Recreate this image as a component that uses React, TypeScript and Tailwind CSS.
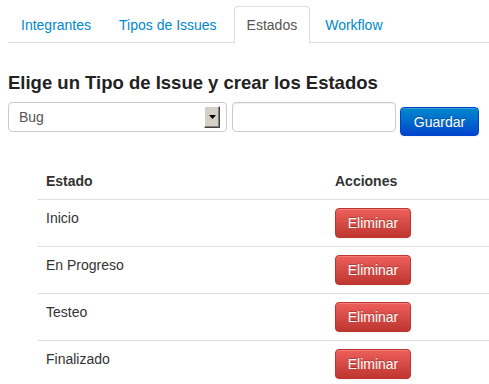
import React from "react";

const font = { fontFamily: '"Liberation Sans", Arial, sans-serif' };

export default function App() {
  const tabs = ["Integrantes", "Tipos de Issues", "Estados", "Workflow"];
  const rows = ["Inicio", "En Progreso", "Testeo", "Finalizado"];
  return (
    <div className="w-[489px] h-[384px] bg-white overflow-hidden text-[14px] text-[#333]" style={font}>
      <div className="pt-[6px] pl-[8px]">
        <ul className="flex border-b border-[#ddd] h-[37px]">
          {tabs.map((t, i) => {
            const active = i === 2;
            return (
              <li key={t} className={"-mb-px " + (i === 1 ? "mr-[4px]" : "mr-[2px]")}>
                <span
                  className={
                    "block px-[12px] py-[8px] leading-[20px] rounded-t-[4px] border " +
                    (active
                      ? "border-[#ddd] border-b-transparent bg-white text-[#555]"
                      : "border-transparent text-[#0088cc]")
                  }
                >
                  {t}
                </span>
              </li>
            );
          })}
        </ul>
      </div>
      <div className="pl-[8px]">
        <h3 className="mt-[30px] text-[18.5px] font-bold leading-[20px] text-[#222]">
          Elige un Tipo de Issue y crear los Estados
        </h3>
        <div className="mt-[9px] flex items-start">
          <div className="relative w-[219px] h-[30px] border border-[#ccc] rounded-[4px] bg-white flex items-center">
            <span className="pl-[10px] text-[#555] text-[14px]">Bug</span>
            <div className="absolute right-[6px] top-[3px] w-[16px] h-[22px] bg-[#d4d0c8] border border-t-white border-l-white border-r-[#404040] border-b-[#404040] flex items-center justify-center shadow-[inset_-1px_-1px_0_#808080]">
              <svg width="7" height="4" viewBox="0 0 7 4">
                <polygon points="0,0 7,0 3.5,4" fill="#000" />
              </svg>
            </div>
          </div>
          <div className="ml-[5px] w-[164px] h-[30px] border border-[#ccc] rounded-[4px] bg-white shadow-[inset_0_1px_1px_rgba(0,0,0,0.075)]" />
          <button
            className="ml-[4px] mt-[5px] w-[79px] h-[29px] rounded-[4px] border border-[#0044cc] text-white leading-[20px] bg-gradient-to-b from-[#0088cc] to-[#0044cc] [text-shadow:0_-1px_0_rgba(0,0,0,0.25)] shadow-[inset_0_1px_0_rgba(255,255,255,0.2),0_1px_2px_rgba(0,0,0,0.05)]"
            style={font}
          >
            Guardar
          </button>
        </div>
      </div>
      <table className="ml-[38px] mt-[27px] w-[451px] border-collapse">
        <thead>
          <tr>
            <th className="text-left font-bold px-[8px] py-[8px] leading-[20px] w-[289px]">Estado</th>
            <th className="text-left font-bold px-[8px] py-[8px] leading-[20px]">Acciones</th>
          </tr>
        </thead>
        <tbody>
          {rows.map((r) => (
            <tr key={r} className="border-t border-[#ddd]">
              <td className="px-[8px] py-[8px] leading-[20px] align-top">{r}</td>
              <td className="px-[8px] py-[8px] leading-[20px] align-top">
                <button
                  className="w-[76px] h-[30px] rounded-[4px] border border-[#bd362f] text-white leading-[20px] bg-gradient-to-b from-[#ee5f5b] to-[#bd362f] [text-shadow:0_-1px_0_rgba(0,0,0,0.25)] shadow-[inset_0_1px_0_rgba(255,255,255,0.2),0_1px_2px_rgba(0,0,0,0.05)]"
                  style={font}
                >
                  Eliminar
                </button>
              </td>
            </tr>
          ))}
        </tbody>
      </table>
    </div>
  );
}
